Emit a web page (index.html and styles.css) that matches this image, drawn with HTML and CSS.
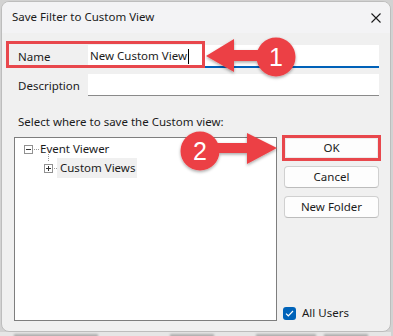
FILE: index.html
```html
<!DOCTYPE html>
<html>
<head>
<meta charset="utf-8">
<link rel="stylesheet" href="styles.css">
</head>
<body>
<div class="screen">
  <div class="dialog">
    <div class="titlebar">
      <span class="title">Save Filter to Custom View</span>
      <svg class="close" width="10" height="10" viewBox="0 0 10 10"><path d="M0.5 0.5L9.5 9.5M9.5 0.5L0.5 9.5" stroke="#1a1a1a" stroke-width="1.1" fill="none"/></svg>
    </div>
    <div class="content">
      <div class="row row-name">
        <span class="label">Name</span>
        <div class="input focused"><span class="value">New Custom View</span><span class="caret"></span></div>
      </div>
      <div class="row row-desc">
        <span class="label">Description</span>
        <div class="input"></div>
      </div>
      <div class="select-label">Select where to save the Custom view:</div>
      <div class="main">
        <div class="tree">
          <div class="node node-root">
            <span class="exp"><svg width="9" height="9" viewBox="0 0 9 9"><rect x="0.5" y="0.5" width="8" height="8" fill="#fff" stroke="#919191"/><path d="M2 4.5H7" stroke="#333"/></svg></span>
            <span class="dots"></span>
            <span class="text">Event Viewer</span>
          </div>
          <div class="vdots"></div>
          <div class="node node-child">
            <span class="exp"><svg width="9" height="9" viewBox="0 0 9 9"><rect x="0.5" y="0.5" width="8" height="8" fill="#fff" stroke="#919191"/><path d="M2 4.5H7M4.5 2V7" stroke="#333"/></svg></span>
            <span class="dots short"></span>
            <span class="text sel">Custom Views</span>
          </div>
        </div>
        <div class="side">
          <div class="buttons">
            <div class="ok-wrap"><button class="btn ok">OK</button></div>
            <button class="btn">Cancel</button>
            <button class="btn folder">New Folder</button>
          </div>
          <div class="check">
            <span class="box"><svg width="9" height="7" viewBox="0 0 9 7"><path d="M1 3.6L3.3 5.8L8 1" stroke="#fff" stroke-width="1.2" fill="none"/></svg></span>
            <span class="check-text">All Users</span>
          </div>
        </div>
      </div>
    </div>
  </div>
  <div class="behind">
    <span class="blur b1"></span><span class="blur b2"></span><span class="blur b3"></span><span class="blur b4"></span>
  </div>

  <div class="name-box"></div>

  <svg class="annot annot1" width="100" height="48" viewBox="0 0 100 48">
    <defs>
      <filter id="sh" x="-20%" y="-20%" width="140%" height="150%"><feDropShadow dx="0" dy="1.5" stdDeviation="1.5" flood-color="#000" flood-opacity="0.35"/></filter>
    </defs>
    <g filter="url(#sh)">
      <path d="M1 19L29 2V13H55V24H29V35Z" fill="#ec4045"/>
      <circle cx="71" cy="20" r="19.5" fill="#ec4045"/>
    </g>
    <text x="71" y="29" text-anchor="middle" class="num">1</text>
  </svg>
  <svg class="annot annot2" width="104" height="48" viewBox="0 0 104 48">
    <g filter="url(#sh)">
      <path d="M98 17L68 2V12H30V22H68V33Z" fill="#ec4045"/>
      <circle cx="21" cy="20" r="19.5" fill="#ec4045"/>
    </g>
    <text x="21" y="29" text-anchor="middle" class="num">2</text>
  </svg>
</div>
</body>
</html>
```

FILE: styles.css
```css
* { box-sizing: border-box; }
html, body { margin: 0; padding: 0; }
body {
  width: 393px;
  height: 336px;
  overflow: hidden;
  font-family: "Noto Sans", "Open Sans", sans-serif;
  font-size: 11.5px;
  color: #1b1b1b;
}
.screen {
  position: relative;
  width: 393px;
  height: 336px;
  background: #d2d2d2;
  padding: 1px 2px 0 1px;
  overflow: hidden;
}
.dialog {
  width: 390px;
  height: 331px;
  background: #f0f0f0;
  border: 1px solid #bdbdbd;
  border-radius: 8px;
  overflow: hidden;
  display: flex;
  flex-direction: column;
}
.titlebar {
  height: 31px;
  flex: none;
  background: #f3f3f5;
  display: flex;
  align-items: center;
  justify-content: space-between;
  padding: 0 9px 0 10px;
}
.title { font-size: 11.5px; line-height: 16px; margin-top: -1px; }
.close { margin-top: 1px; }
.content {
  padding: 12px 11px 0 12px;
  display: flex;
  flex-direction: column;
  flex: 1;
}
.row {
  display: flex;
  align-items: center;
  height: 23px;
}
.row-desc { margin-top: 6px; height: 22px; }
.label { width: 74px; padding-left: 4px; flex: none; }
.input {
  flex: 1;
  height: 100%;
  background: #fff;
  border-bottom: 1px solid #8a8a8a;
  display: flex;
  align-items: center;
  padding-left: 2px;
}
.input.focused { border-bottom: 2px solid #0061b8; padding-top: 1px; }
.value { line-height: 16px; }
.caret { width: 1px; height: 15px; background: #000; margin-left: 1px; }
.select-label { margin-top: 18px; padding-left: 4px; line-height: 16px; }
.main {
  display: flex;
  margin-top: 7px;
  flex: 1;
  padding-bottom: 8px;
}
.tree {
  width: 263px;
  height: 184px;
  background: #fff;
  border: 1px solid #7e7e7e;
  padding: 2px 0 0 9px;
  flex: none;
}
.node { display: flex; align-items: center; height: 18px; }
.exp { width: 9px; height: 9px; display: block; flex: none; }
.exp svg { display: block; }
.dots {
  width: 5px; height: 1px; margin: 0 1px 0 1px;
  background-image: linear-gradient(to right, #9a9a9a 1px, transparent 1px);
  background-size: 2px 1px;
}
.dots.short { width: 3px; margin-right: 0; }
.vdots {
  width: 1px; height: 7px; margin-left: 24px; margin-top: -4px;
  background-image: linear-gradient(to bottom, #9a9a9a 1px, transparent 1px);
  background-size: 1px 2px;
}
.node-child { margin-left: 20px; margin-top: -3px; height: 20px; }
.text { line-height: 16px; }
.text.sel { background: #f0f0f0; padding: 2px 2px 2px 3px; }
.side {
  flex: 1;
  display: flex;
  flex-direction: column;
  justify-content: space-between;
  padding-left: 7px;
}
.buttons { display: flex; flex-direction: column; }
.btn {
  font-family: inherit;
  font-size: 11.5px;
  color: #1b1b1b;
  width: 95px;
  height: 22px;
  background: #fdfdfd;
  border: 1px solid #d0d0d0;
  border-bottom-color: #bcbcbc;
  border-radius: 4px;
  padding: 0;
  line-height: 18px;
}
.ok-wrap {
  width: 99px;
  height: 26px;
  border: 3px solid #e8474c;
  margin-left: -2px;
  margin-top: -2px;
  display: flex;
}
.btn.ok { width: 93px; height: 20px; border-radius: 2px; border-color: #ececec; }
.buttons .btn + .btn { margin-top: 8px; }
.ok-wrap + .btn { margin-top: 5px; }
.check { display: flex; align-items: center; margin-bottom: 2px; margin-left: -1px; }
.box {
  width: 13px; height: 13px; border-radius: 3px;
  background: #0063b9;
  display: flex; align-items: center; justify-content: center;
}
.box svg { display: block; }
.check-text { margin-left: 6px; line-height: 16px; }
.behind {
  height: 5px;
  background: #e6e6e6;
  position: relative;
  margin-left: -1px;
}
.blur { position: absolute; top: 2px; height: 4px; background: #8a8a8a; filter: blur(1.2px); opacity: 0.6; }
.b1 { left: 14px; width: 84px; }
.b2 { left: 170px; width: 44px; }
.b3 { left: 256px; width: 60px; }
.b4 { left: 324px; width: 44px; }
.name-box {
  position: absolute;
  left: 6px;
  top: 41px;
  width: 199px;
  height: 27px;
  border: 3px solid #e8474c;
}
.annot { position: absolute; overflow: visible; }
.annot1 { left: 205px; top: 37px; }
.annot2 { left: 179px; top: 131px; }
.num { fill: #fff; font-family: "Liberation Sans", Arial, sans-serif; font-size: 25px; }
```
